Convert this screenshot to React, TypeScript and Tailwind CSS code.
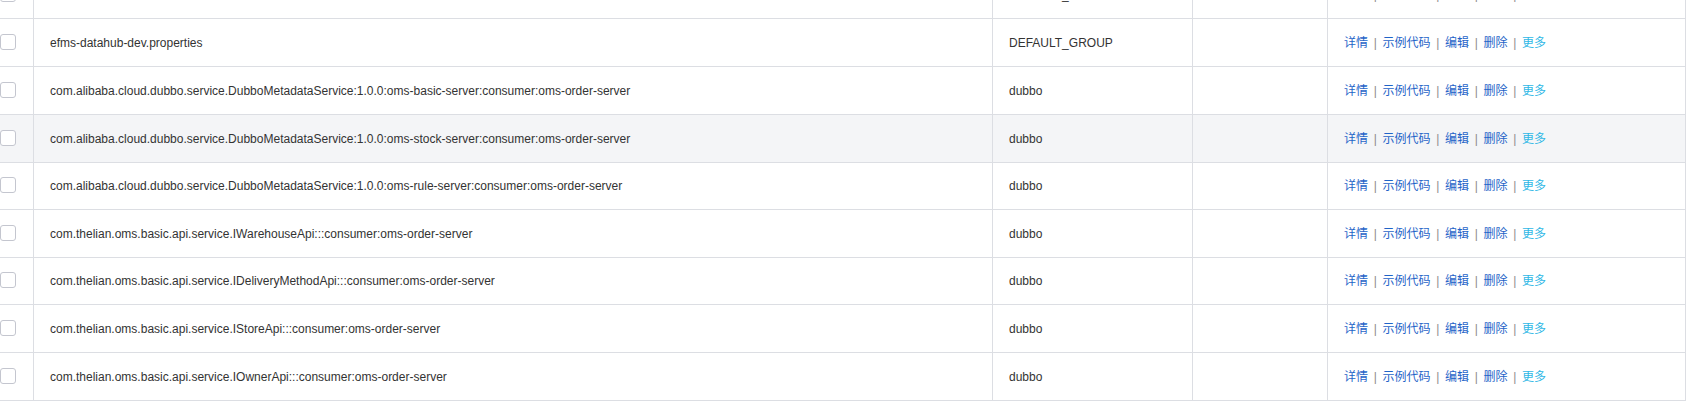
import React from "react";

type Row = { name: string; group: string; hover?: boolean; h: number };

const rows: Row[] = [
  { name: "efms-datahub-dev.properties", group: "DEFAULT_GROUP", h: 48 },
  {
    name: "com.alibaba.cloud.dubbo.service.DubboMetadataService:1.0.0:oms-basic-server:consumer:oms-order-server",
    group: "dubbo",
    h: 48,
  },
  {
    name: "com.alibaba.cloud.dubbo.service.DubboMetadataService:1.0.0:oms-stock-server:consumer:oms-order-server",
    group: "dubbo",
    hover: true,
    h: 48,
  },
  {
    name: "com.alibaba.cloud.dubbo.service.DubboMetadataService:1.0.0:oms-rule-server:consumer:oms-order-server",
    group: "dubbo",
    h: 47,
  },
  { name: "com.thelian.oms.basic.api.service.IWarehouseApi:::consumer:oms-order-server", group: "dubbo", h: 48 },
  { name: "com.thelian.oms.basic.api.service.IDeliveryMethodApi:::consumer:oms-order-server", group: "dubbo", h: 47 },
  { name: "com.thelian.oms.basic.api.service.IStoreApi:::consumer:oms-order-server", group: "dubbo", h: 48 },
  { name: "com.thelian.oms.basic.api.service.IOwnerApi:::consumer:oms-order-server", group: "dubbo", h: 48 },
];

function Sep() {
  return <span className="mx-[5.7px] text-[#8c8c8c]">|</span>;
}

function Actions() {
  return (
    <div className="flex items-center whitespace-nowrap">
      <a className="text-[#1f64c8] cursor-pointer">详情</a>
      <Sep />
      <a className="text-[#1f64c8] cursor-pointer">示例代码</a>
      <Sep />
      <a className="text-[#1f64c8] cursor-pointer">编辑</a>
      <Sep />
      <a className="text-[#1f64c8] cursor-pointer">删除</a>
      <Sep />
      <a className="text-[#30b8e6] cursor-pointer">更多</a>
    </div>
  );
}

function Checkbox() {
  return <span className="block w-[16px] h-[16px] mb-[2px] rounded-[3px] border border-[#c4c6cf] bg-white" />;
}

function TableRow({ row, className }: { row: Row; className?: string }) {
  const hClass = row.h === 47 ? "h-[47px]" : "h-[48px]";
  return (
    <div
      className={
        "flex border-b border-[#dcdee3] " +
        hClass +
        " " +
        (row.hover ? "bg-[#f4f5f7] " : "bg-white ") +
        (className ?? "")
      }
    >
      <div className="w-[34px] shrink-0 flex items-center border-r border-[#dcdee3]">
        <Checkbox />
      </div>
      <div className="w-[959px] shrink-0 flex items-center px-4 border-r border-[#dcdee3] whitespace-nowrap overflow-hidden">
        {row.name}
      </div>
      <div className="w-[200px] shrink-0 flex items-center px-4 border-r border-[#dcdee3] whitespace-nowrap">
        {row.group}
      </div>
      <div className="w-[135px] shrink-0 flex items-center px-4 border-r border-[#dcdee3]" />
      <div className="w-[358px] shrink-0 flex items-center px-4 border-r border-[#dcdee3]">
        <Actions />
      </div>
    </div>
  );
}

export default function App() {
  return (
    <div className="w-[1689px] h-[401px] overflow-hidden bg-white text-[12px] text-[#333333] font-['Liberation_Sans','Noto_Sans_CJK_SC',sans-serif]">
      <div className="w-[1686px] flex flex-col">
        <TableRow row={{ name: "", group: "DEFAULT_GROUP", h: 48 }} className="-mt-[29px]" />
        {rows.map((r, i) => (
          <TableRow key={i} row={r} />
        ))}
      </div>
    </div>
  );
}
